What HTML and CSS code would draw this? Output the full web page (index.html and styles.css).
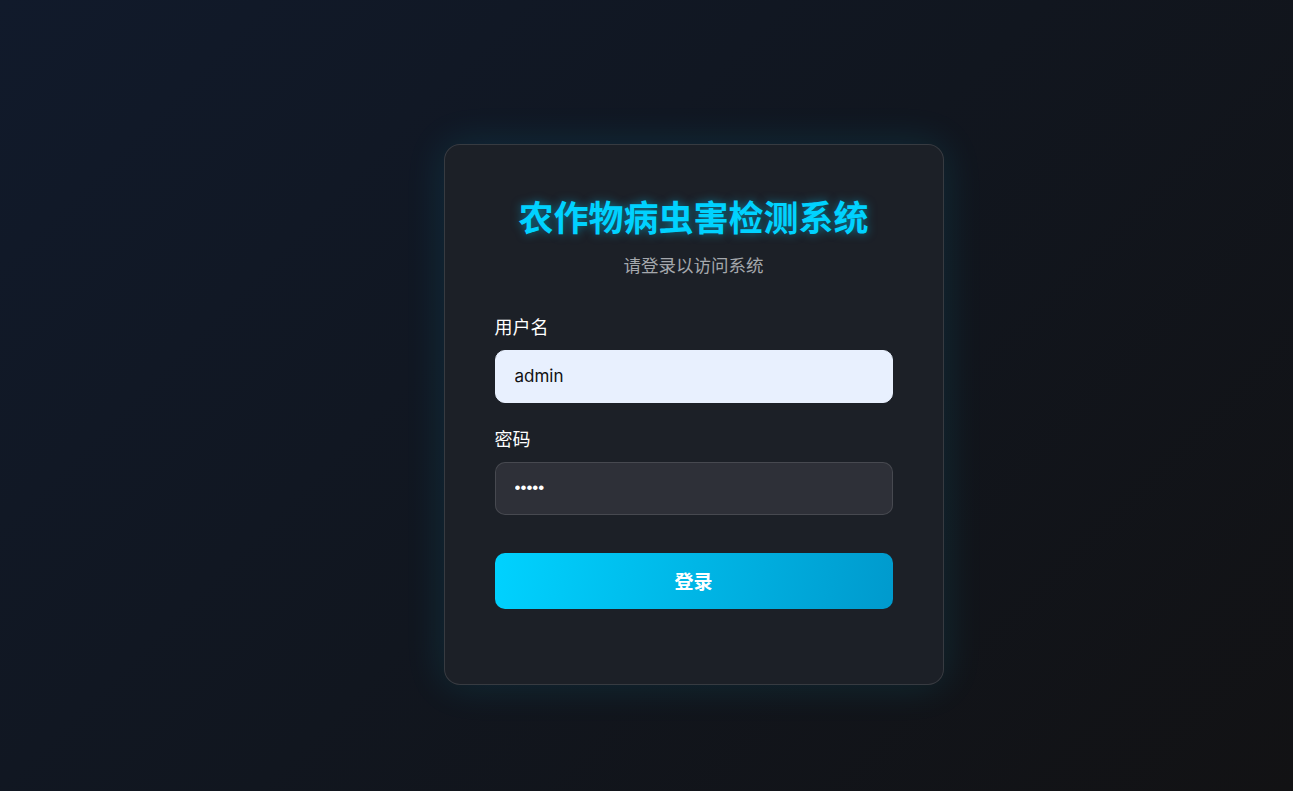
FILE: index.html
```html
<!DOCTYPE html>
<html lang="zh-CN">
<head>
    <meta charset="UTF-8">
    <title>农作物病虫害检测系统 - 登录</title>
    <link rel="stylesheet" href="styles.css">
</head>
<body>
    <div class="login-card">
        <h1 class="title">农作物病虫害检测系统</h1>
        <p class="subtitle">请登录以访问系统</p>

        <form id="loginForm" class="login-form">
            <div class="form-group">
                <label for="username">用户名</label>
                <input type="text" id="username" class="input input-filled" value="admin">
            </div>
            <div class="form-group">
                <label for="password">密码</label>
                <input type="password" id="password" class="input input-password" value="12345">
            </div>
            <button type="submit" class="login-btn">登录</button>
        </form>
    </div>
</body>
</html>
```

FILE: styles.css
```css
* { box-sizing: border-box; }
html, body { height: 100%; }
body {
    margin: 0;
    font-family: Inter, "Noto Sans CJK SC", "Noto Sans", sans-serif;
    background: linear-gradient(135deg, #111a2b 0%, #11161f 50%, #121214 100%);
    color: #fff;
    display: flex;
    align-items: center;
    justify-content: center;
}
.login-card {
    width: 500px;
    margin: 37px 0 0 94px;
    padding: 50px 50px 75px;
    background: rgba(30, 33, 40, 0.95);
    border: 1px solid rgba(255, 255, 255, 0.12);
    border-radius: 16px;
    box-shadow: 0 0 40px rgba(0, 210, 255, 0.12);
}
.title {
    margin: 0;
    text-align: center;
    font-size: 35px;
    font-weight: 700;
    line-height: 46px;
    color: #00d2ff;
    text-shadow: 0 0 10px rgba(0, 210, 255, 0.5);
}
.subtitle {
    margin: 13px 0 0;
    text-align: center;
    font-size: 17.5px;
    line-height: 24px;
    color: #a5a8ad;
}
.login-form { margin-top: 38px; }
.form-group { margin-bottom: 25px; }
.form-group label {
    display: block;
    font-size: 18px;
    line-height: 24px;
    margin-bottom: 10px;
    color: #fff;
}
.input {
    display: block;
    width: 100%;
    height: 53px;
    padding: 0 19px;
    font-family: Inter, sans-serif;
    font-size: 17px;
    color: #fff;
    background: #2e3038;
    border: 1px solid rgba(255, 255, 255, 0.12);
    border-radius: 10px;
    outline: none;
}
.input-filled {
    background: #e8f0fe;
    border-color: #e8f0fe;
    color: #111;
}
.input-password {
    font-family: "Liberation Sans", sans-serif;
    letter-spacing: 0;
}
.login-btn {
    display: block;
    width: 100%;
    height: 56px;
    margin-top: 38px;
    border: none;
    border-radius: 10px;
    background: linear-gradient(100deg, #00d2ff 0%, #009acd 100%);
    color: #fff;
    font-family: "Noto Sans CJK SC", sans-serif;
    font-size: 19px;
    font-weight: 700;
    cursor: pointer;
}
```
